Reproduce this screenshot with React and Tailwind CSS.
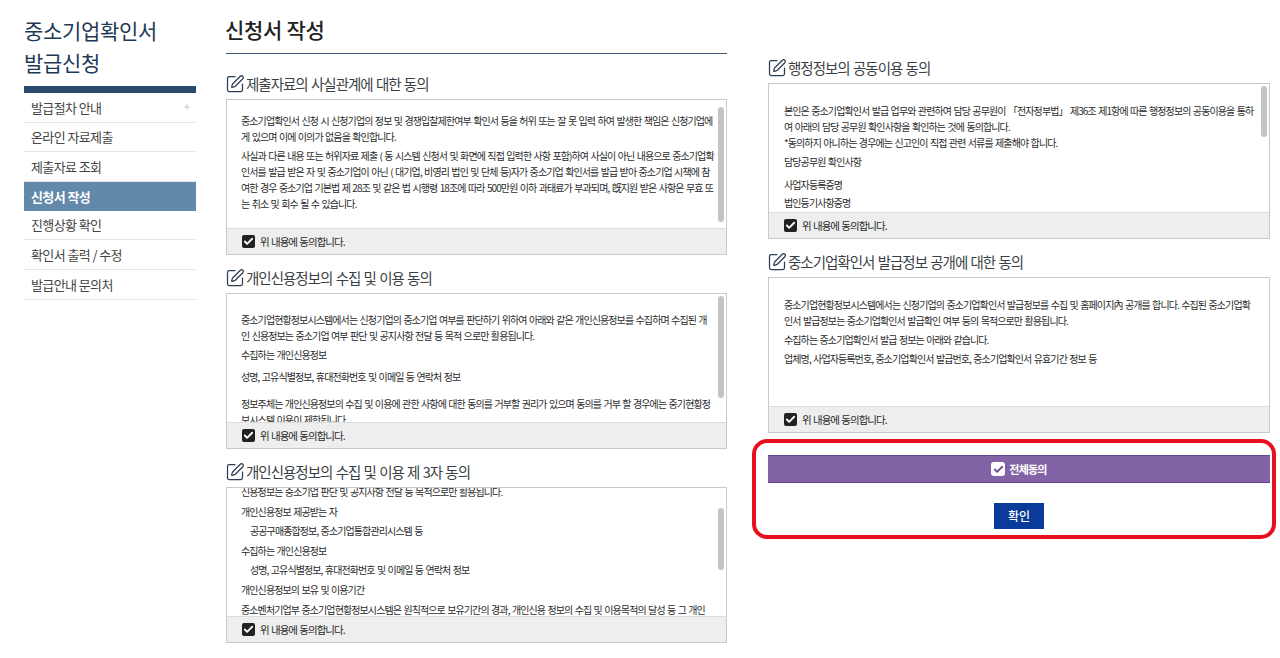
import { Check, Plus, SquarePen } from "lucide-react";

const menu = ["발급절차 안내", "온라인 자료제출", "제출자료 조회", "신청서 작성", "진행상황 확인", "확인서 출력 / 수정", "발급안내 문의처"];

// 줄바꿈은 원본 그대로 맞추려고 줄 단위로 적음
function Lines({ lines, className = "mb-[3px]" }) {
    return (
        <div className={className}>
            {lines.map((line) => (
                <div key={line} className="whitespace-nowrap">{line}</div>
            ))}
        </div>
    );
}

function Box({ title, thumb, bodyClass, children }) {
    return (
        <section>
            <h3 className="flex items-center gap-[1px] text-[14.5px] leading-[20px] tracking-[-1px] text-[#3a3f45] [word-spacing:1px]">
                <SquarePen size={20} strokeWidth={1.5} className="-ml-[1px] text-[#2c3e55]" />
                {title}
            </h3>
            <div className="relative mt-[5px] border border-[#c9c9c9]">
                <div className={`h-[128px] overflow-hidden text-[10px] leading-[16px] tracking-[-0.9px] text-[#2a2a2a] [word-spacing:1px] ${bodyClass}`}>
                    {children}
                </div>
                {thumb && <div className={`absolute right-[2px] w-[6px] rounded-full bg-[#c4c4c4] ${thumb}`}></div>}
                <div className="flex h-[26px] items-center gap-[5px] border-t border-[#dcdcdc] bg-[#eeeeee] pl-[15px] text-[10.5px] tracking-[-1px] text-[#2a2a2a] [word-spacing:1px]">
                    <span className="flex h-[13px] w-[13px] items-center justify-center rounded-[2px] bg-[#222]">
                        <Check size={11} strokeWidth={4} className="text-white" />
                    </span>
                    위 내용에 동의합니다.
                </div>
            </div>
        </section>
    );
}

export default function App() {
    return (
        <div className="relative flex h-[658px] w-[1280px] overflow-hidden bg-white pl-[24px] font-['Noto_Sans_CJK_KR','Noto_Sans',sans-serif]">
            {/* 왼쪽 메뉴 */}
            <aside className="w-[172px] shrink-0 pt-[14px]">
                <h2 className="text-[21px] leading-[32px] tracking-[-0.3px] text-[#1f3a58]">
                    중소기업확인서
                    <br />
                    발급신청
                </h2>
                <div className="mt-[8px] h-[7px] bg-[#2a4a6e]"></div>
                <ul className="text-[13px] tracking-[-0.6px] text-[#444]">
                    {menu.map((item, i) => (
                        <li
                            key={item}
                            className={
                                i === 3
                                    ? "flex h-[29px] items-center bg-[#6288aa] pl-[7px] font-bold text-white"
                                    : "flex h-[29.6px] items-center justify-between border-b border-[#e6e6e6] pl-[7px] pr-[5px]"
                            }
                        >
                            {item}
                            {i === 0 && <Plus size={8} strokeWidth={2.5} className="text-[#bbb]" />}
                        </li>
                    ))}
                </ul>
            </aside>

            {/* 가운데 */}
            <main className="ml-[30px] w-[501px] shrink-0">
                <h1 className="-ml-px pt-[14px] text-[21px] font-medium leading-[30px] tracking-[-0.3px] text-[#222]">신청서 작성</h1>
                <div className="mt-[9px] h-px bg-[#3f5877]"></div>
                <div className="mt-[20px] flex flex-col gap-[13px]">
                    <Box title="제출자료의 사실관계에 대한 동의" thumb="top-[7px] h-[115px]" bodyClass="pl-[14px] pt-[13px]">
                        <Lines lines={["중소기업확인서 신청 시 신청기업의 정보 및 경쟁입찰제한여부 확인서 등을 허위 또는 잘 못 입력 하여 발생한 책임은 신청기업에", "게 있으며 이에 이의가 없음을 확인합니다."]} />
                        <Lines lines={["사실과 다른 내용 또는 허위자료 제출 ( 동 시스템 신청서 및 화면에 직접 입력한 사항 포함)하여 사실이 아닌 내용으로 중소기업확", "인서를 발급 받은 자 및 중소기업이 아닌 ( 대기업, 비영리 법인 및 단체 등)자가 중소기업 확인서를 발급 받아 중소기업 시책에 참", "여한 경우 중소기업 기본법 제 28조 및 같은 법 시행령 18조에 따라 500만원 이하 과태료가 부과되며, 旣지원 받은 사항은 무효 또", "는 취소 및 회수 될 수 있습니다."]} />
                    </Box>
                    <Box title="개인신용정보의 수집 및 이용 동의" thumb="top-[2px] h-[102px]" bodyClass="pl-[14px] pt-[18px]">
                        <Lines lines={["중소기업현황정보시스템에서는 신청기업의 중소기업 여부를 판단하기 위하여 아래와 같은 개인신용정보를 수집하며 수집된 개", "인 신용정보는 중소기업 여부 판단 및 공지사항 전달 등 목적 으로만 활용됩니다."]} />
                        <Lines lines={["수집하는 개인신용정보"]} className="mb-[6px]" />
                        <Lines lines={["성명, 고유식별정보, 휴대전화번호 및 이메일 등 연락처 정보"]} className="mb-[11px]" />
                        <Lines lines={["정보주체는 개인신용정보의 수집 및 이용에 관한 사항에 대한 동의를 거부할 권리가 있으며 동의를 거부 할 경우에는 중기현황정", "보시스템 이용이 제한됩니다."]} />
                    </Box>
                    <Box title="개인신용정보의 수집 및 이용 제 3자 동의" thumb="top-[20px] h-[62px]" bodyClass="pl-[14px]">
                        <div className="-mt-[4px] flex flex-col gap-[3.6px]">
                            <Lines lines={["신용정보는 중소기업 판단 및 공지사항 전달 등 목적으로만 활용됩니다."]} className="" />
                            <Lines lines={["개인신용정보 제공받는 자"]} className="" />
                            <Lines lines={["공공구매종합정보, 중소기업통합관리시스템 등"]} className="pl-[9px]" />
                            <Lines lines={["수집하는 개인신용정보"]} className="" />
                            <Lines lines={["성명, 고유식별정보, 휴대전화번호 및 이메일 등 연락처 정보"]} className="pl-[9px]" />
                            <Lines lines={["개인신용정보의 보유 및 이용기간"]} className="" />
                            <Lines lines={["중소벤처기업부 중소기업현황정보시스템은 원칙적으로 보유기간의 경과, 개인신용 정보의 수집 및 이용목적의 달성 등 그 개인"]} className="" />
                        </div>
                    </Box>
                </div>
            </main>

            {/* 오른쪽 */}
            <div className="ml-[41px] w-[502px] shrink-0 pt-[58px]">
                <div className="flex flex-col gap-[13px]">
                    <Box title="행정정보의 공동이용 동의" thumb="top-[2px] h-[51px]" bodyClass="pl-[15px] pt-[19px]">
                        <Lines lines={["본인은 중소기업확인서 발급 업무와 관련하여 담당 공무원이 「전자정부법」 제36조 제1항에 따른 행정정보의 공동이용을 통하", "여 아래의 담당 공무원 확인사항을 확인하는 것에 동의합니다."]} className="mb-0" />
                        <Lines lines={["*동의하지 아니하는 경우에는 신고인이 직접 관련 서류를 제출해야 합니다."]} />
                        <Lines lines={["담당공무원 확인사항"]} className="mb-[7px]" />
                        <Lines lines={["사업자등록증명"]} className="mb-[2px]" />
                        <Lines lines={["법인등기사항증명"]} />
                    </Box>
                    <Box title="중소기업확인서 발급정보 공개에 대한 동의" bodyClass="pl-[15px] pt-[19px]">
                        <Lines lines={["중소기업현황정보시스템에서는 신청기업의 중소기업확인서 발급정보를 수집 및 홈페이지內 공개를 합니다. 수집된 중소기업확", "인서 발급정보는 중소기업확인서 발급확인 여부 등의 목적으로만 활용됩니다."]} />
                        <Lines lines={["수집하는 중소기업확인서 발급 정보는 아래와 같습니다."]} />
                        <Lines lines={["업체명, 사업자등록번호, 중소기업확인서 발급번호, 중소기업확인서 유효기간 정보 등"]} />
                    </Box>
                </div>
                <div className="mt-[22px] flex h-[28px] items-center justify-center gap-[4px] border-y border-[#5f4590] bg-[#8264a6] text-[11px] font-bold tracking-[-0.8px] text-white">
                    <span className="flex h-[14px] w-[14px] items-center justify-center rounded-[3px] bg-white">
                        <Check size={11} strokeWidth={4} className="text-[#6a4c94]" />
                    </span>
                    전체동의
                </div>
                <div className="mt-[20px] flex justify-center">
                    <button className="h-[26px] w-[50px] bg-[#0a3a9a] text-[12px] font-medium text-white">확인</button>
                </div>
            </div>

            {/* 빨간 표시 */}
            <div className="pointer-events-none absolute left-[752px] top-[439px] h-[100px] w-[524px] rounded-[15px] border-[4px] border-[#e8101f]"></div>
        </div>
    );
}
